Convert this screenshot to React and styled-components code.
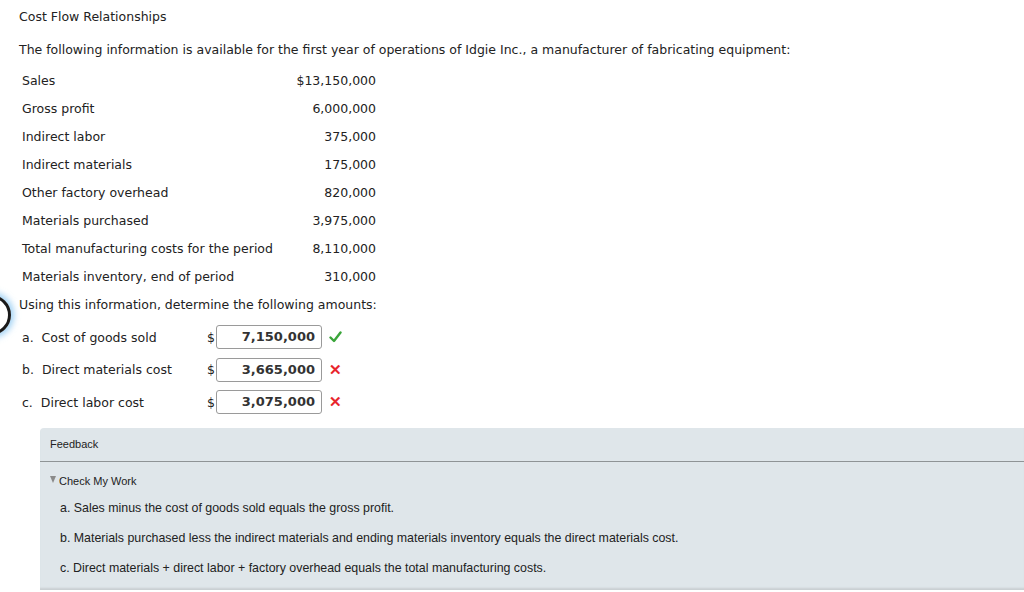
import React from 'react';
import styled, {createGlobalStyle} from 'styled-components';

const GlobalStyle = createGlobalStyle`
  html, body {
    margin: 0;
    padding: 0;
    background: #ffffff;
    overflow: hidden;
  }
  body {
    font-family: Verdana, "DejaVu Sans", sans-serif;
    color: #222222;
  }
`;

const Page = styled.div`
  width: 1024px;
  height: 592px;
  position: relative;
  overflow: hidden;
  padding: 9px 0 0 19px;
  box-sizing: border-box;
  font-size: 12.5px;
`;

const Title = styled.div`
  line-height: 15px;
`;

const Intro = styled.div`
  line-height: 15px;
  margin-top: 18px;
`;

const DataTable = styled.div`
  display: grid;
  grid-template-columns: 1fr auto;
  width: 354px;
  grid-auto-rows: 28px;
  align-items: center;
  margin: 9px 0 0 3px;
`;

const Label = styled.div``;

const Amount = styled.div`
  text-align: right;
`;

const Prompt = styled.div`
  line-height: 15px;
  margin-top: 7px;
`;

const Answers = styled.div`
  display: grid;
  grid-template-columns: 185px 9px 106px 22px;
  grid-auto-rows: 32.5px;
  align-items: center;
  margin: 9px 0 0 3px;
`;

const Dollar = styled.div``;

const AnswerBox = styled.div`
  height: 24px;
  box-sizing: border-box;
  border: 1px solid #9a9a9a;
  border-radius: 3px;
  font-weight: bold;
  font-size: 13px;
  text-align: right;
  padding-right: 6px;
  line-height: 22px;
  color: #333333;
`;

const Mark = styled.span`
  justify-self: end;
  padding-right: 2px;
  color: ${p => (p.ok ? '#3aa53a' : '#e8262b')};
  font-weight: bold;
  font-family: Arial, "Liberation Sans", sans-serif;
  font-size: 15px;
  display: flex;
  align-items: center;
`;

// keyboard focus ring that sticks out from the left edge
const FocusRing = styled.div`
  position: absolute;
  left: -29px;
  top: 295px;
  width: 34px;
  height: 34px;
  border-radius: 50%;
  border: 3px solid #1a1a1a;
  box-shadow: 0 0 6px 3px rgba(120, 190, 240, 0.7);
`;

const Feedback = styled.div`
  margin: 9px 0 0 21px;
  background: #dfe6ea;
  border-top-left-radius: 4px;
  height: 162px;
  font-family: Arial, "Liberation Sans", sans-serif;
  color: #222222;
  box-shadow: inset 0 -3px 2px -1px #c9cfd2;
`;

const FeedbackHead = styled.div`
  font-size: 11px;
  padding: 10px 0 0 10px;
  height: 23px;
  border-bottom: 1px solid #8f9496;
  line-height: 12px;
`;

const Toggle = styled.div`
  font-size: 11px;
  margin: 13px 0 0 10px;
  display: flex;
  align-items: center;
  gap: 3px;
`;

const Triangle = styled.span`
  width: 0;
  height: 0;
  border-left: 3.5px solid transparent;
  border-right: 3.5px solid transparent;
  border-top: 7px solid #8a8a8a;
  margin-top: -3px;
`;

const Hints = styled.div`
  margin: 14px 0 0 20px;
  font-size: 12.4px;
  display: flex;
  flex-direction: column;
  gap: 16px;
  line-height: 14px;
`;

const data = [
  ['Sales', '$13,150,000'],
  ['Gross profit', '6,000,000'],
  ['Indirect labor', '375,000'],
  ['Indirect materials', '175,000'],
  ['Other factory overhead', '820,000'],
  ['Materials purchased', '3,975,000'],
  ['Total manufacturing costs for the period', '8,110,000'],
  ['Materials inventory, end of period', '310,000'],
];

const answers = [
  ['a.', 'Cost of goods sold', '7,150,000', true],
  ['b.', 'Direct materials cost', '3,665,000', false],
  ['c.', 'Direct labor cost', '3,075,000', false],
];

const hints = [
  'a. Sales minus the cost of goods sold equals the gross profit.',
  'b. Materials purchased less the indirect materials and ending materials inventory equals the direct materials cost.',
  'c. Direct materials + direct labor + factory overhead equals the total manufacturing costs.',
];

export default function App() {
  return (
    <Page>
      <GlobalStyle/>
      <FocusRing/>
      <Title>Cost Flow Relationships</Title>
      <Intro>
        The following information is available for the first year of operations of Idgie Inc., a manufacturer of fabricating equipment:
      </Intro>
      <DataTable>
        {data.map(([label, value]) => (
          <React.Fragment key={label}>
            <Label>{label}</Label>
            <Amount>{value}</Amount>
          </React.Fragment>
        ))}
      </DataTable>
      <Prompt>Using this information, determine the following amounts:</Prompt>
      <Answers>
        {answers.map(([letter, label, value, ok]) => (
          <React.Fragment key={letter}>
            <Label>{letter}&nbsp; {label}</Label>
            <Dollar>$</Dollar>
            <AnswerBox>{value}</AnswerBox>
            <Mark ok={ok}>{ok ? (
              <svg width="13" height="12" viewBox="0 0 13 12">
                <path d="M1.5 6.5 L5 10 L11.5 1.5" fill="none" stroke="#3aa53a" strokeWidth="2.4" strokeLinecap="round" strokeLinejoin="round"/>
              </svg>
            ) : '✕'}</Mark>
          </React.Fragment>
        ))}
      </Answers>
      <Feedback>
        <FeedbackHead>Feedback</FeedbackHead>
        <Toggle><Triangle/>Check My Work</Toggle>
        <Hints>
          {hints.map(h => <div key={h}>{h}</div>)}
        </Hints>
      </Feedback>
    </Page>
  );
}
